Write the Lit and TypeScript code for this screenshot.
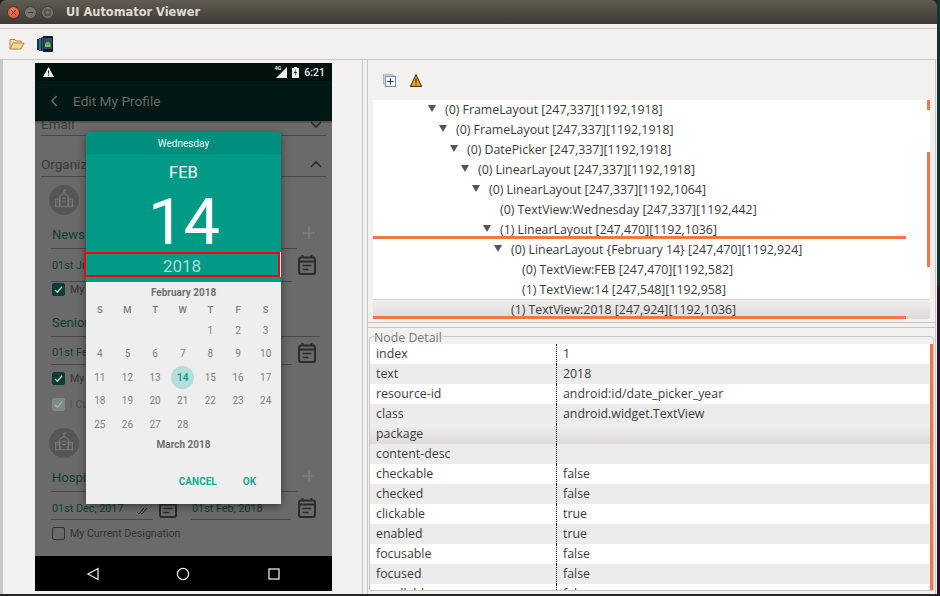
import { LitElement, html, css, svg, unsafeCSS } from "lit";
import { customElement } from "lit/decorators.js";

const FONT = unsafeCSS(`"Open Sans", "Noto Sans", sans-serif`);

const treeRows: Array<{ indent: number; arrow: boolean; text: string; sel?: boolean }> = [
  { indent: 55, arrow: true, text: "(0) FrameLayout [247,337][1192,1918]" },
  { indent: 66, arrow: true, text: "(0) FrameLayout [247,337][1192,1918]" },
  { indent: 77, arrow: true, text: "(0) DatePicker [247,337][1192,1918]" },
  { indent: 88, arrow: true, text: "(0) LinearLayout [247,337][1192,1918]" },
  { indent: 99, arrow: true, text: "(0) LinearLayout [247,337][1192,1064]" },
  { indent: 110, arrow: false, text: "(0) TextView:Wednesday [247,337][1192,442]" },
  { indent: 110, arrow: true, text: "(1) LinearLayout [247,470][1192,1036]" },
  { indent: 121, arrow: true, text: "(0) LinearLayout {February 14} [247,470][1192,924]" },
  { indent: 132, arrow: false, text: "(0) TextView:FEB [247,470][1192,582]" },
  { indent: 132, arrow: false, text: "(1) TextView:14 [247,548][1192,958]" },
  { indent: 121, arrow: false, text: "(1) TextView:2018 [247,924][1192,1036]", sel: true },
];

const details: Array<[string, string]> = [
  ["index", "1"],
  ["text", "2018"],
  ["resource-id", "android:id/date_picker_year"],
  ["class", "android.widget.TextView"],
  ["package", ""],
  ["content-desc", ""],
  ["checkable", "false"],
  ["checked", "false"],
  ["clickable", "true"],
  ["enabled", "true"],
  ["focusable", "false"],
  ["focused", "false"],
  ["scrollable", "false"],
];

const calendarIcon = html`<svg class="cal" viewBox="0 0 18 20" width="18" height="20">
  <path d="M4.5 0v3M13.5 0v3" stroke="#2b2b2b" stroke-width="2" fill="none" />
  <rect x="1" y="2.5" width="16" height="16.5" rx="2" fill="none" stroke="#2b2b2b" stroke-width="2" />
  <path d="M1 6.5h16" stroke="#2b2b2b" stroke-width="2" />
  <path d="M4.5 10.5h9M4.5 14.5h6" stroke="#2b2b2b" stroke-width="1.6" />
</svg>`;

const buildingIcon = svg`<g fill="none" stroke="#7c7c7c" stroke-width="1.2">
  <path d="M8 26v-9h5v9M13 26V13l5-3 5 3v13M23 26v-9h5v9M7 26h22" />
  <path d="M18 10V6M18 6h3" />
  <path d="M16 16h4M16 20h4M9.5 20h2M24.5 20h2" />
</g>`;

const avatar = html`<svg width="30" height="30" viewBox="0 0 36 36">${buildingIcon}</svg>`;

const plus = html`<svg class="plus" width="12" height="12" viewBox="0 0 12 12"><path d="M6 0v12M0 6h12" stroke="#858585" stroke-width="1.2"/></svg>`;

const check = html`<span class="box on"><svg viewBox="0 0 14 14" width="13" height="13"><path d="M2.5 7.5l3 3 6-7" fill="none" stroke="#c8d4d0" stroke-width="1.6"/></svg></span>`;

@customElement("app-root")
export class AppRoot extends LitElement {
  static styles = css`
    :host {
      display: block;
      width: 940px;
      height: 596px;
      overflow: hidden;
      font-family: ${FONT};
      background: #2a1a22;
      color: #3c3c3c;
    }
    .screen { width: 940px; height: 596px; display: flex; }
    .win { width: 937px; height: 596px; flex: none; display: flex; flex-direction: column; }
    .edge { width: 3px; flex: none; background: linear-gradient(#0e3530 0 48%, #2c1226 48% 100%); }
    .title {
      height: 24px; flex: none; display: flex; align-items: center; padding-left: 7px; gap: 4px;
      background: linear-gradient(#605c51, #3d3b37); border-radius: 6px 6px 0 0;
    }
    .tb-btn {
      width: 13px; height: 13px; border-radius: 50%; box-sizing: border-box;
      display: flex; align-items: center; justify-content: center;
      background: #75746e; border: 1px solid #3f3e3a;
    }
    .tb-btn.close { background: radial-gradient(circle at 50% 40%, #f4805a, #dd4a2c); }
    .title-text {
      margin-left: 8px; color: #dfdbd2; font: 700 11.4px/24px "DejaVu Sans", sans-serif;
    }
    .toolbar {
      height: 32px; flex: none; margin-top: 4px; background: #f2f1ef; box-sizing: border-box;
      border-top: 1px solid #c9c7c1; border-bottom: 1px solid #c9c7c1;
      display: flex; align-items: center; padding-left: 9px; gap: 12px;
    }
    .band { background: #f2f1ef; overflow: hidden; }
    .main { flex: 1; display: flex; min-height: 0; background: #f2f1ef; }
    .strip { width: 3px; background: #c9c7c1; flex: none; }
    .left {
      width: 360px; flex: none; box-sizing: border-box; padding: 3px 0 0 32px;
      background: #f2f1ef; border-right: 1px solid #c9c7c1;
    }
    .phone {
      width: 297px; height: 528px; position: relative; overflow: hidden;
      display: flex; flex-direction: column; background: #6a6a6a; font-family: Roboto, sans-serif;
    }
    .status {
      height: 18px; flex: none; background: #00110e; display: flex; align-items: center;
      padding: 0 7px 0 8px; color: #e8e8e8; font-size: 10.5px; font-weight: 500;
    }
    .status .sp { flex: 1; }
    .tiny { font-size: 5.5px; font-weight: 700; margin-right: -5px; position: relative; top: -4px; }
    .appbar {
      height: 40px; flex: none; background: #011814; display: flex; align-items: center;
      padding-left: 15px; color: #626a68; font-size: 13.7px; gap: 15px;
      position: relative; z-index: 1; box-shadow: 0 1px 2px #0006;
    }
    .form { flex: 1; min-height: 0; position: relative; overflow: hidden; color: #333; }
    .frow {
      display: flex; box-sizing: border-box; border-bottom: 1px solid #484848;
      font-size: 13.5px; line-height: 16px; color: #3a3a3a;
    }
    .head { margin: 0 6px; justify-content: space-between; }
    .email { height: 15px; align-items: flex-start; }
    .email span { margin-top: -5px; }
    .org { height: 41px; align-items: flex-end; padding-bottom: 4px; padding-right: 4px; }
    .chev { flex: none; }
    .avatar { width: 30px; height: 30px; border-radius: 50%; background: #565656; margin-left: 14px; flex: none; }
    .fr { display: flex; margin-left: 16px; }
    .field { color: #0f3e37; font-size: 13px; align-items: flex-end; padding: 0 0 5px 1px; }
    .plus { margin: 12px 0 0 6px; flex: none; }
    .dates { display: flex; margin-left: 16px; align-items: flex-start; }
    .date {
      border-bottom: 1px solid #484848; color: #0f3e37; font-size: 10.8px; line-height: 14px;
      box-sizing: border-box; display: flex; align-items: flex-end; padding-left: 1px;
    }
    .tick { margin: 0 5px 1px auto; flex: none; }
    .cal { flex: none; display: block; margin: 6px 0 0 6px; }
    .cal.last { margin-left: 7px; }
    .cb { display: flex; align-items: center; gap: 5px; margin-left: 17px; font-size: 10.6px; line-height: 13px; color: #333; }
    .box { width: 13px; height: 13px; box-sizing: border-box; border-radius: 2px; border: 1px solid #333; display: flex; align-items: center; justify-content: center; flex: none; }
    .box.on { background: #0a3d35; border-color: #0a3d35; }
    .box.dim { background: #7d8a87; border-color: #7d8a87; }
    .dim-text { color: #505050; }
    .nav {
      height: 35px; flex: none; background: #000; display: flex; align-items: center; justify-content: space-around;
      padding: 0 13px; position: relative;
    }
    .dialog {
      position: absolute; left: 51px; top: 69px; width: 195px; height: 372px; background: #eee;
      box-shadow: 0 2px 8px #0007; z-index: 2; display: flex; flex-direction: column;
    }
    .d-day { height: 22px; background: #008f7e; color: #f1f8f6; font-size: 10px; text-align: center; line-height: 23px; flex: none; }
    .d-head { height: 98px; flex: none; background: #009a87; color: #fff; text-align: center; }
    .d-mon { font-size: 16.5px; line-height: 18px; padding-top: 10px; }
    .d-num { font-size: 65px; line-height: 60px; margin-top: 10px; letter-spacing: -1px; }
    .d-year {
      height: 25px; width: 196px; flex: none; box-sizing: border-box; margin-left: -2px; border: 2px solid #f00;
      background: #009a87; color: #a9dcd5; font-size: 17px; line-height: 24px; text-align: center; position: relative;
    }
    .d-strip { height: 5px; flex: none; background: #009a87; }
    .d-title { font-size: 10px; font-weight: 700; color: #6f6f6f; text-align: center; line-height: 13px; margin-top: 3.5px; }
    .d-grid { display: grid; grid-template-columns: repeat(7, 27.65px); color: #7f7f7f; font-size: 10px; text-align: center; }
    .d-week { height: 18px; line-height: 18px; font-size: 9.5px; font-weight: 500; color: #7c7c7c; margin-top: 2px; }
    .d-cell { height: 23.5px; line-height: 23.5px; position: relative; }
    .d-cell.sel { color: #14a08f; font-weight: 700; }
    .d-cell.sel::before {
      content: ""; position: absolute; left: 2.5px; top: 0; width: 23px; height: 23px; border-radius: 50%; background: #b6ded9;
    }
    .d-cell span { position: relative; }
    .d-next { font-size: 10px; font-weight: 700; color: #6f6f6f; text-align: center; line-height: 13px; margin-top: 1.5px; }
    .d-actions {
      margin-top: auto; height: 44px; display: flex; justify-content: flex-end; align-items: flex-start; gap: 26px;
      padding: 16px 25px 0 0; box-sizing: border-box; color: #1da795; font-size: 10px; line-height: 12px; font-weight: 700;
    }

    .right { flex: 1; min-width: 0; display: flex; padding-left: 4px; background: #f2f1ef; }
    .r-inner {
      width: 569px; min-height: 0; display: flex; flex-direction: column; box-sizing: border-box;
      border-left: 1px solid #c9c7c1; border-right: 1px solid #c9c7c1;
    }
    .hier {
      height: 263px; flex: none; box-sizing: border-box; padding: 0 5px;
      border-bottom: 1px solid #c9c7c1; display: flex; flex-direction: column;
    }
    .r-tools { height: 40px; flex: none; display: flex; align-items: center; gap: 14px; padding-left: 10px; box-sizing: border-box; }
    .tree { height: 219px; flex: none; background: #fff; position: relative; overflow: hidden; }
    .t-list { margin-top: -1px; }
    .t-row { height: 20px; display: flex; align-items: center; font-size: 12.35px; color: #3b3b3b; white-space: nowrap; box-sizing: border-box; }
    .t-row.sel { background: linear-gradient(#f0efed, #dcdbd9); border-top: 1px solid #d8d8d6; }
    .t-arrow { width: 0; height: 0; border-left: 4px solid transparent; border-right: 4px solid transparent; border-top: 7px solid #555; margin-right: 9px; flex: none; position: relative; top: -1px; }
    .t-gap { width: 17px; flex: none; }
    .ob { position: absolute; background: #f07746; }
    .detail {
      flex: 1; min-height: 0; margin-top: 4px; box-sizing: border-box; border-top: 1px solid #c9c7c1;
      padding: 8px 1px 3px; display: flex; flex-direction: column;
    }
    .frame {
      flex: 1; min-height: 0; position: relative; box-sizing: border-box; border: 1px solid #c9c7c1;
      border-radius: 4px 4px 0 0; padding-top: 7px;
    }
    .legend {
      position: absolute; left: 4px; top: -6px; background: #f2f1ef; padding-right: 1px;
      font-size: 12.35px; line-height: 13px; color: #777; z-index: 1;
    }
    .clip { height: 100%; overflow: hidden; position: relative; }
    .d-tr { height: 20px; display: flex; font-size: 12.35px; line-height: 20px; background: #fff; color: #3b3b3b; }
    .d-tr:nth-child(even) { background: #ececec; }
    .d-tr.sel { background: linear-gradient(#f0efed, #dcdbd9); }
    .d-k { width: 187px; flex: none; padding-left: 6px; box-sizing: border-box; border-right: 1px dotted #111; }
    .d-v { padding-left: 6px; }
    .r-bar { position: absolute; right: 0; top: 0; width: 3px; bottom: 0; background: #f07746; }
    .bottom { height: 2px; flex: none; background: #2a2422; }
  `;

  private renderDialog() {
    const feb: Array<number | null> = [null, null, null, null, 1, 2, 3, ...Array.from({ length: 25 }, (_, i) => i + 4)];
    return html`<div class="dialog">
      <div class="d-day">Wednesday</div>
      <div class="d-head">
        <div class="d-mon">FEB</div>
        <div class="d-num">14</div>
      </div>
      <div class="d-year">2018</div>
      <div class="d-strip"></div>
      <div class="d-title">February 2018</div>
      <div class="d-grid">
        ${["S", "M", "T", "W", "T", "F", "S"].map((d) => html`<div class="d-week">${d}</div>`)}
        ${feb.map((n) => html`<div class="d-cell ${n === 14 ? "sel" : ""}"><span>${n ?? ""}</span></div>`)}
      </div>
      <div class="d-next">March 2018</div>
      <div class="d-actions"><span>CANCEL</span><span>OK</span></div>
    </div>`;
  }

  private renderForm() {
    return html`<div class="form">
      <div class="frow head email">
        <span>Email</span>
        <svg class="chev" style="margin:0 4px 0 0" width="12" height="8" viewBox="0 0 12 8"><path d="M1 1l5 5 5-5" fill="none" stroke="#2b2b2b" stroke-width="1.6"/></svg>
      </div>
      <div class="frow head org">
        <span>Organiz</span>
        <svg class="chev" style="margin-bottom:4px" width="12" height="8" viewBox="0 0 12 8"><path d="M1 7l5-5 5 5" fill="none" stroke="#2b2b2b" stroke-width="1.6"/></svg>
      </div>
      <div class="avatar" style="margin-top:8px">${avatar}</div>
      <div class="fr">
        <div class="frow field" style="height:34px;width:246px"><span>News</span></div>${plus}
      </div>
      <div class="dates">
        <div class="date" style="width:241px;height:33px;padding-bottom:8px">01st Ju</div>${calendarIcon}
      </div>
      <div class="cb" style="margin-top:1px">${check}<span>My</span></div>
      <div class="fr">
        <div class="frow field" style="height:41px;width:269px"><span>Senior</span></div>
      </div>
      <div class="dates">
        <div class="date" style="width:241px;height:28px;padding-bottom:4px">01st Fe</div>${calendarIcon}
      </div>
      <div class="cb" style="margin-top:7px">${check}<span>My</span></div>
      <div class="cb" style="margin-top:13px">
        <span class="box dim"><svg viewBox="0 0 14 14" width="13" height="13"><path d="M2.5 7.5l3 3 6-7" fill="none" stroke="#a3b1ad" stroke-width="1.6"/></svg></span>
        <span class="dim-text">I Cu</span>
      </div>
      <div class="avatar" style="margin-top:17px">${avatar}</div>
      <div class="fr">
        <div class="frow field" style="height:34px;width:246px"><span>Hospit</span></div>${plus}
      </div>
      <div class="dates">
        <div class="date" style="width:102px;height:28px;padding-bottom:3px">
          <span>01st Dec, 2017</span>
          <svg class="tick" width="12" height="8" viewBox="0 0 12 8"><path d="M1 5l2 2 5-6M5 6l1 1 5-6" fill="none" stroke="#1d1d1d" stroke-width="1"/></svg>
        </div>
        ${calendarIcon}
        <div class="date" style="width:100px;height:28px;padding-bottom:3px;margin-left:14px">01st Feb, 2018</div>
        <svg class="cal last" viewBox="0 0 18 20" width="18" height="20">
          <path d="M4.5 0v3M13.5 0v3" stroke="#2b2b2b" stroke-width="2" fill="none" />
          <rect x="1" y="2.5" width="16" height="16.5" rx="2" fill="none" stroke="#2b2b2b" stroke-width="2" />
          <path d="M1 6.5h16" stroke="#2b2b2b" stroke-width="2" />
          <path d="M4.5 10.5h9M4.5 14.5h6" stroke="#2b2b2b" stroke-width="1.6" />
        </svg>
      </div>
      <div class="cb" style="margin-top:7px"><span class="box"></span><span>My Current Designation</span></div>
    </div>`;
  }

  render() {
    return html`<div class="screen"><div class="win">
      <div class="title">
        <span class="tb-btn close"><svg width="7" height="7" viewBox="0 0 7 7"><path d="M1 1l5 5M6 1L1 6" stroke="#5a1a0a" stroke-width="1"/></svg></span>
        <span class="tb-btn"><svg width="7" height="7" viewBox="0 0 7 7"><path d="M1 3.5h5" stroke="#3a3935" stroke-width="1"/></svg></span>
        <span class="tb-btn"><svg width="7" height="7" viewBox="0 0 7 7"><rect x="1" y="1" width="5" height="5" fill="none" stroke="#3a3935"/></svg></span>
        <span class="title-text">UI Automator Viewer</span>
      </div>
      <div class="band">
        <div class="toolbar">
          <svg width="16" height="12" viewBox="0 0 16 12">
            <path d="M1 11V1.5h5l1 1.5h5v2" fill="#f4dfae" stroke="#b08a4a"/>
            <path d="M1 11l3-6h11l-3 6z" fill="#f8d391" stroke="#b08a4a"/>
          </svg>
          <svg width="16" height="16" viewBox="0 0 16 16">
            <rect x="0" y="3" width="2" height="11" fill="#14344f"/>
            <rect x="2" y="2" width="2" height="13" fill="#2b6da3"/>
            <rect x="4" y="1.5" width="1.5" height="13.5" fill="#10283c"/>
            <rect x="5.5" y="0" width="10.5" height="16" rx="1" fill="#161616"/>
            <rect x="6.5" y="2" width="8.5" height="11" fill="#1f4f7c"/>
            <path d="M8 11V8.8a2.75 2.75 0 0 1 5.5 0V11z" fill="#8fbf3a"/>
            <rect x="9.2" y="7.6" width="1" height="1" fill="#1f4f7c"/>
            <rect x="11.3" y="7.6" width="1" height="1" fill="#1f4f7c"/>
          </svg>
        </div>
      </div>
      <div class="main">
        <div class="strip"></div>
        <div class="left">
          <div class="phone">
            <div class="status">
              <svg width="11" height="10" viewBox="0 0 11 10"><path d="M5.5 0L11 10H0z" fill="#eee"/><path d="M5.5 3.5v3M5.5 7.5v1" stroke="#111" stroke-width="1"/></svg>
              <span class="sp"></span>
              <span class="tiny">4G</span>
              <svg width="11" height="11" viewBox="0 0 11 11"><path d="M11 0v11H0z" fill="#eee"/></svg>
              <svg style="margin-left:5px" width="7" height="11" viewBox="0 0 7 11"><path d="M2 0h3v1h2v10H0V1h2z" fill="#eee"/><path d="M4 2L2 6h1.5L3 9l2-4H3.5z" fill="#111"/></svg>
              <span style="margin-left:5px">6:21</span>
            </div>
            <div class="appbar">
              <svg width="8" height="12" viewBox="0 0 8 12"><path d="M6.5 1L2 6l4.5 5" fill="none" stroke="#626a68" stroke-width="1.6"/></svg>
              <span>Edit My Profile</span>
            </div>
            ${this.renderForm()}
            <div class="nav">
              <svg width="14" height="14" viewBox="0 0 14 14"><path d="M12 1.5v11L2 7z" fill="none" stroke="#e6e6e6" stroke-width="1.3"/></svg>
              <svg width="14" height="14" viewBox="0 0 14 14"><circle cx="7" cy="7" r="5.6" fill="none" stroke="#e6e6e6" stroke-width="1.3"/></svg>
              <svg width="14" height="14" viewBox="0 0 14 14"><rect x="2" y="2" width="10" height="10" fill="none" stroke="#e6e6e6" stroke-width="1.3"/></svg>
            </div>
            ${this.renderDialog()}
          </div>
        </div>
        <div class="right">
          <div class="r-inner">
            <div class="hier">
              <div class="r-tools">
                <svg width="13" height="13" viewBox="0 0 14 14">
                  <rect x="0.5" y="0.5" width="10" height="10" fill="#dfe7f0" stroke="#9fb2c8"/>
                  <rect x="2.5" y="2.5" width="11" height="11" fill="#fff" stroke="#5f7fa3"/>
                  <path d="M8 4.5v7M4.5 8h7" stroke="#123" stroke-width="1"/>
                </svg>
                <svg width="12" height="13" viewBox="0 0 12 13">
                  <path d="M6 .7L11.6 12.4H.4z" fill="#f9a11b" stroke="#222" stroke-width="1"/>
                  <path d="M6 4.5v4M6 9.5v1.3" stroke="#222" stroke-width="1.1"/>
                </svg>
              </div>
              <div class="tree">
                <div class="t-list">
                  ${treeRows.map(
                    (r) => html`<div class="t-row ${r.sel ? "sel" : ""}" style="padding-left:${r.indent}px">
                      ${r.arrow ? html`<span class="t-arrow"></span>` : html`<span class="t-gap"></span>`}
                      <span>${r.text}</span>
                    </div>`
                  )}
                </div>
                <div class="ob" style="left:554px;top:0;width:3px;height:10px"></div>
                <div class="ob" style="left:554px;top:52px;width:3px;height:115px"></div>
                <div class="ob" style="left:0;top:136px;width:533px;height:3px"></div>
                <div class="ob" style="left:0;top:216px;width:533px;height:3px"></div>
              </div>
            </div>
            <div class="detail">
              <div class="frame">
                <div class="legend">Node Detail</div>
                <div class="clip">
                  ${details.map(
                    ([k, v]) => html`<div class="d-tr ${k === "package" ? "sel" : ""}">
                      <div class="d-k">${k}</div><div class="d-v">${v}</div>
                    </div>`
                  )}
                  <div class="r-bar"></div>
                </div>
              </div>
            </div>
          </div>
        </div>
      </div>
      <div class="bottom"></div>
    </div><div class="edge"></div></div>`;
  }
}
